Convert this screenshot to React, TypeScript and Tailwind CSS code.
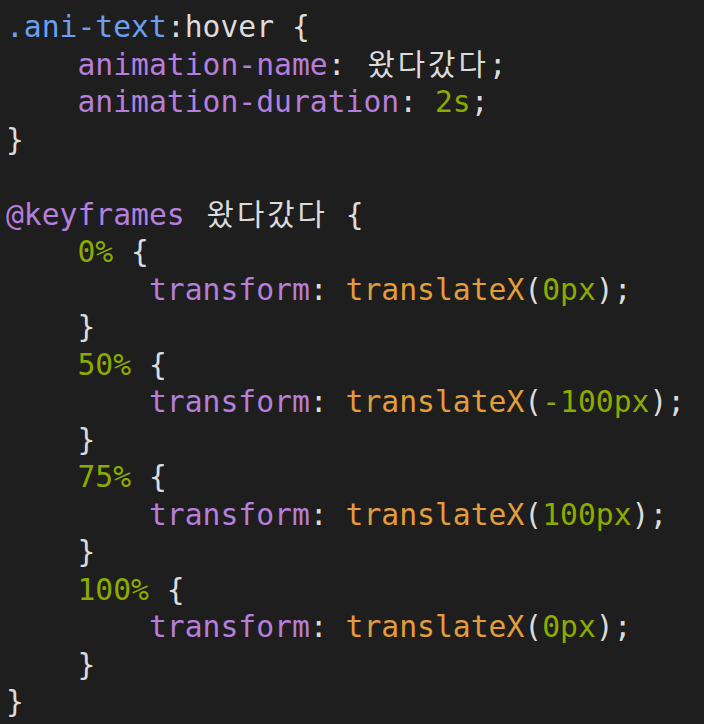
type Tok = [string, string];

const W = "text-[#dcdcdc]";
const P = "text-[#b67fdc]";
const B = "text-[#6ba0f0]";
const G = "text-[#8daa00]";
const O = "text-[#e39d3a]";
const K = "text-[#dcdcdc] tracking-[3px] pl-[4px]";

const lines: Tok[][] = [
  [[B, ".ani-text"], [W, ":hover {"]],
  [[P, "    animation-name"], [W, ": "], [K, "왔다갔다"], [W, ";"]],
  [[P, "    animation-duration"], [W, ": "], [G, "2s"], [W, ";"]],
  [[W, "}"]],
  [],
  [[P, "@keyframes"], [W, " "], [K, "왔다갔다"], [W, " {"]],
  [[G, "    0%"], [W, " {"]],
  [[P, "        transform"], [W, ": "], [O, "translateX"], [W, "("], [G, "0px"], [W, ");"]],
  [[W, "    }"]],
  [[G, "    50%"], [W, " {"]],
  [[P, "        transform"], [W, ": "], [O, "translateX"], [W, "("], [G, "-100px"], [W, ");"]],
  [[W, "    }"]],
  [[G, "    75%"], [W, " {"]],
  [[P, "        transform"], [W, ": "], [O, "translateX"], [W, "("], [G, "100px"], [W, ");"]],
  [[W, "    }"]],
  [[G, "    100%"], [W, " {"]],
  [[P, "        transform"], [W, ": "], [O, "translateX"], [W, "("], [G, "0px"], [W, ");"]],
  [[W, "    }"]],
  [[W, "}"]],
];

export default function App() {
  return (
    <div className="w-[704px] h-[724px] overflow-hidden bg-[#1e1e1e] pt-2 pl-[6px] font-['DejaVu_Sans_Mono','Noto_Sans_CJK_KR',monospace] text-[29.7px] leading-[37.5px]">
      {lines.map((line, i) => (
        <div key={i} className="h-[37.5px] whitespace-pre">
          {line.map(([cls, text], j) => (
            <span key={j} className={cls}>
              {text}
            </span>
          ))}
        </div>
      ))}
    </div>
  );
}
